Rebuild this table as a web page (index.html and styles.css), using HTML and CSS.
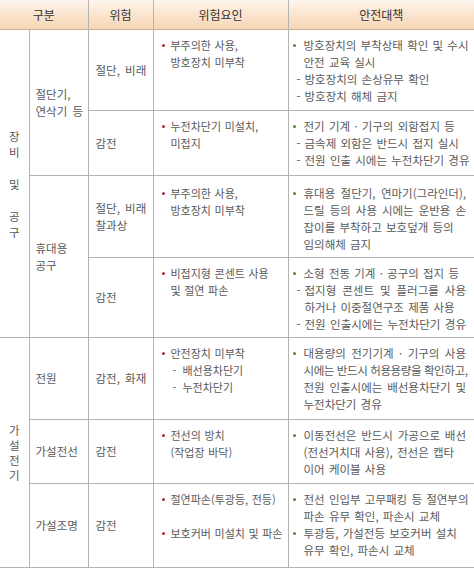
FILE: index.html
```html
<!DOCTYPE html>
<html lang="ko">
<head>
<meta charset="utf-8">
<title>안전대책</title>
<link rel="stylesheet" href="styles.css">
</head>
<body>
<table class="tbl">
  <colgroup>
    <col class="c1"><col class="c2"><col class="c3"><col class="c4"><col class="c5">
  </colgroup>
  <thead>
    <tr class="hd">
      <th colspan="2" class="first">구분</th>
      <th>위험</th>
      <th>위험요인</th>
      <th class="last">안전대책</th>
    </tr>
  </thead>
  <tbody>
    <tr class="r1">
      <td rowspan="4" class="cat first"><div class="vt">장<br>비<br><br>및<br><br>공<br>구</div></td>
      <td rowspan="2" class="sub">절단기,<br>연삭기 등</td>
      <td class="risk">절단, 비래</td>
      <td class="fac">
        <div class="it"><span class="dot red"></span><div class="tx">부주의한 사용,<br>방호장치 미부착</div></div>
      </td>
      <td class="meas last">
        <div class="it"><span class="dot grn"></span><div class="tx"><span class="j">방호장치의 부착상태 확인 및 수시</span><span class="ln">안전 교육 실시</span></div></div>
        <div class="ds"><span class="dash">-</span><div class="tx">방호장치의 손상유무 확인</div></div>
        <div class="ds"><span class="dash">-</span><div class="tx">방호장치 해체 금지</div></div>
      </td>
    </tr>
    <tr class="r2">
      <td class="risk">감전</td>
      <td class="fac">
        <div class="it"><span class="dot red"></span><div class="tx">누전차단기 미설치,<br>미접지</div></div>
      </td>
      <td class="meas last">
        <div class="it"><span class="dot grn"></span><div class="tx">전기 기계 · 기구의 외함접지 등</div></div>
        <div class="ds"><span class="dash">-</span><div class="tx">금속제 외함은 반드시 접지 실시</div></div>
        <div class="ds"><span class="dash">-</span><div class="tx"><span class="j">전원 인출 시에는 누전차단기 경유</span></div></div>
      </td>
    </tr>
    <tr class="r3">
      <td rowspan="2" class="sub">휴대용<br>공구</td>
      <td class="risk">절단, 비래<br>찰과상</td>
      <td class="fac">
        <div class="it"><span class="dot red"></span><div class="tx">부주의한 사용,<br>방호장치 미부착</div></div>
      </td>
      <td class="meas last">
        <div class="it"><span class="dot grn"></span><div class="tx"><span class="j">휴대용 절단기, 연마기(그라인더),</span><span class="j">드릴 등의 사용 시에는 운반용 손</span><span class="ln">잡이를 부착하고 보호덮개 등의</span><span class="ln">임의해체 금지</span></div></div>
      </td>
    </tr>
    <tr class="r4">
      <td class="risk">감전</td>
      <td class="fac">
        <div class="it"><span class="dot red"></span><div class="tx">비접지형 콘센트 사용<br>및 절연 파손</div></div>
      </td>
      <td class="meas last">
        <div class="it"><span class="dot grn"></span><div class="tx">소형 전동 기계 · 공구의 접지 등</div></div>
        <div class="ds"><span class="dash">-</span><div class="tx"><span class="j">접지형 콘센트 및 플러그를 사용</span><span class="ln">하거나 이중절연구조 제품 사용</span></div></div>
        <div class="ds"><span class="dash">-</span><div class="tx"><span class="j">전원 인출시에는 누전차단기 경유</span></div></div>
      </td>
    </tr>
    <tr class="r5">
      <td rowspan="3" class="cat first"><div class="vt vt2">가<br>설<br>전<br>기</div></td>
      <td class="sub">전원</td>
      <td class="risk">감전, 화재</td>
      <td class="fac">
        <div class="it"><span class="dot red"></span><div class="tx">안전장치 미부착</div></div>
        <div class="sd"><span class="dash">-</span><div class="tx">배선용차단기</div></div>
        <div class="sd"><span class="dash">-</span><div class="tx">누전차단기</div></div>
      </td>
      <td class="meas last">
        <div class="it"><span class="dot grn"></span><div class="tx"><span class="j">대용량의 전기기계 · 기구의 사용</span><span class="ln tt">시에는 반드시 허용용량을 확인하고,</span><span class="j">전원 인출시에는 배선용차단기 및</span><span class="ln">누전차단기 경유</span></div></div>
      </td>
    </tr>
    <tr class="r6">
      <td class="sub">가설전선</td>
      <td class="risk">감전</td>
      <td class="fac">
        <div class="it"><span class="dot red"></span><div class="tx">전선의 방치<br>(작업장 바닥)</div></div>
      </td>
      <td class="meas last">
        <div class="it"><span class="dot grn"></span><div class="tx"><span class="j">이동전선은 반드시 가공으로 배선</span><span class="ln">(전선거치대 사용), 전선은 캡타</span><span class="ln">이어 케이블 사용</span></div></div>
      </td>
    </tr>
    <tr class="r7">
      <td class="sub">가설조명</td>
      <td class="risk">감전</td>
      <td class="fac">
        <div class="it"><span class="dot red"></span><div class="tx">절연파손(투광등, 전등)</div></div>
        <div class="it gap"><span class="dot red"></span><div class="tx">보호커버 미설치 및 파손</div></div>
      </td>
      <td class="meas last">
        <div class="it"><span class="dot grn"></span><div class="tx"><span class="j">전선 인입부 고무패킹 등 절연부의</span><span class="ln">파손 유무 확인, 파손시 교체</span></div></div>
        <div class="it"><span class="dot grn"></span><div class="tx"><span class="ln">투광등, 가설전등 보호커버 설치</span><span class="ln">유무 확인, 파손시 교체</span></div></div>
      </td>
    </tr>
  </tbody>
</table>
</body>
</html>
```
FILE: styles.css
```css
html, body {
  margin: 0;
  padding: 0;
  background: #ffffff;
}
body {
  width: 474px;
  height: 568px;
  overflow: hidden;
  font-family: "Noto Sans CJK KR", "Noto Sans", sans-serif;
  font-size: 11px;
  color: #5a5a5a;
}
.tbl {
  width: 474px;
  border-collapse: collapse;
  table-layout: fixed;
}
.c1 { width: 29px; }
.c2 { width: 59px; }
.c3 { width: 65px; }
.c4 { width: 135px; }
.c5 { width: 186px; }

.tbl th, .tbl td {
  border: 1px solid #b4b4b4;
  padding: 0;
  line-height: 17px;
  word-spacing: 2px;
}
.tbl th {
  border-top: none;
  height: 29px;
  background: linear-gradient(to bottom, #fef6ee 0%, #fbe6d2 45%, #f7d6b6 100%);
  border-bottom: 1px solid #c8b29c;
  font-weight: normal;
  color: #333333;
  font-size: 12px;
  text-align: center;
  vertical-align: middle;
}
.tbl .first { border-left: none; }
.tbl .last { border-right: none; }

.r1 { height: 81px; }
.r2 { height: 65px; }
.r3 { height: 82px; }
.r4 { height: 80px; }
.r5 { height: 82px; }
.r6 { height: 64px; }
.r7 { height: 84px; }

.tbl td.cat {
  text-align: center;
  vertical-align: middle;
  font-size: 11.5px;
}
.vt { line-height: 16px; }
.vt2 { line-height: 15px; }

.tbl td.sub {
  vertical-align: middle;
  padding-left: 6px;
  white-space: nowrap;
  font-size: 11.5px;
}
.tbl td.risk {
  vertical-align: middle;
  padding-left: 7px;
  white-space: nowrap;
  font-size: 11.5px;
}
.tbl td.fac {
  vertical-align: top;
  padding: 7px 0 0 7px;
  font-size: 11px;
  word-spacing: 0.5px;
}
.tbl td.meas {
  vertical-align: top;
  padding: 7px 8px 0 3px;
  font-size: 11.5px;
  word-spacing: 1px;
}
.tbl .r3 td.fac, .tbl .r3 td.meas { padding-top: 9px; }

.it, .ds, .sd {
  display: flex;
  align-items: flex-start;
  white-space: nowrap;
}
.it.gap { margin-top: 17px; }
.ds { padding-left: 5px; }
.sd { padding-left: 12px; }

.dot {
  flex: 0 0 auto;
  width: 3px;
  height: 3px;
  border-radius: 50%;
  margin: 7px 0 0 1px;
}
.fac .dot { margin-right: 6px; }
.meas .dot { margin-right: 8px; }
.red { background: #b0283a; }
.grn { background: #4e8a3e; }

.dash {
  flex: 0 0 8px;
  width: 8px;
}
.sd .dash { flex-basis: 10px; width: 10px; }

.tx { flex: 1 1 auto; min-width: 0; }
.j, .ln { display: block; }
.j {
  text-align: justify;
  text-align-last: justify;
}
.tt { letter-spacing: -0.4px; word-spacing: 0; }
```
